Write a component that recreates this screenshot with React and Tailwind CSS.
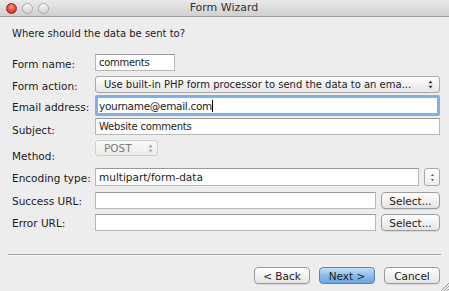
import React from "react";

function Arrows({ className = "" }) {
  return (
    <svg width="5" height="9" viewBox="0 0 5 9" className={className}>
      <path d="M2.5 0.5 L4.5 3.2 L0.5 3.2 Z" fill="currentColor" />
      <path d="M2.5 8.5 L4.5 5.8 L0.5 5.8 Z" fill="currentColor" />
    </svg>
  );
}

function Light({ red }) {
  return red ? (
    <div className="w-[11px] h-[11px] rounded-full bg-[radial-gradient(circle_at_50%_35%,#ff9a8a_0%,#e0443a_55%,#a8201a_100%)] border border-[#9a2a22]" />
  ) : (
    <div className="w-[11px] h-[11px] rounded-full bg-[linear-gradient(#f6f6f6,#d4d4d4)] border border-[#a9a9a9]" />
  );
}

function Row({ label, mt, h, labelPad = "pt-[2px]", children }) {
  return (
    <div className={`flex items-start ${mt} ${h}`}>
      <div className={`w-[95px] pl-[12px] shrink-0 whitespace-nowrap ${labelPad}`}>{label}</div>
      <div className="flex-1 flex items-start pr-[9px]">{children}</div>
    </div>
  );
}

function Btn({ children, className = "" }) {
  return (
    <div
      className={`h-[17px] flex items-center justify-center rounded-[4px] border border-[#9c9c9c] bg-[linear-gradient(#ffffff,#f1f1f1_50%,#e4e4e4)] shadow-[0_1px_0_rgba(0,0,0,0.08)] ${className}`}
    >
      {children}
    </div>
  );
}

export default function App() {
  return (
    <div className="w-[449px] h-[291px] bg-[#ededed] flex flex-col overflow-hidden relative text-[10.5px] leading-[12px] text-[#1c1c1c] font-['DejaVu_Sans',sans-serif]">
      {/* Title bar */}
      <div className="h-[17px] shrink-0 flex items-center relative bg-[linear-gradient(#e9e9e9,#d0d0d0)] border-b border-[#9d9d9d]">
        <div className="flex items-center gap-[5px] pl-[6px]">
          <Light red />
          <Light />
          <Light />
        </div>
        <div className="flex-1 text-center pr-[50px] text-[#333] text-[11px]">Form Wizard</div>
      </div>

      <div className="pl-[12px] mt-[11px] text-[10px]">Where should the data be sent to?</div>

      <Row label="Form name:" mt="mt-[14px]" h="h-[18px]" labelPad="pt-[4px]">
        <div className="w-[80px] h-[17px] bg-white border border-[#b9b9b9] border-t-[#999] flex items-center pl-[3px] text-[10px] tracking-[-0.3px]">
          comments
        </div>
      </Row>

      <Row label="Form action:" mt="mt-[4px]" h="h-[18px]" labelPad="pt-[4px]">
        <div className="flex-1 h-[17px] rounded-[3px] border border-[#a8a8a8] bg-[linear-gradient(#ffffff,#f0f0f0_55%,#e6e6e6)] flex items-center pl-[8px] pr-[6px] text-[10px]">
          <span className="flex-1">Use built-in PHP form processor to send the data to an ema...</span>
          <Arrows className="text-[#333]" />
        </div>
      </Row>

      <Row label="Email address:" mt="mt-[1px]" h="h-[21px]" labelPad="pt-[6px]">
        <div className="flex-1 h-[21px] bg-white border-[3px] border-[#7fb0e6] rounded-[2px] flex items-center pl-[1px] text-[10.5px] tracking-[-0.3px]">
          yourname@email.com<span className="w-px h-[12px] bg-black" />
        </div>
      </Row>

      <Row label="Subject:" mt="mt-[2px]" h="h-[18px]" labelPad="pt-[6px]">
        <div className="flex-1 h-[17px] bg-white border border-[#b9b9b9] border-t-[#999] flex items-center pl-[3px] text-[10px] tracking-[-0.2px]">
          Website comments
        </div>
      </Row>

      <Row label="Method:" mt="mt-[4px]" h="h-[18px]" labelPad="pt-[10px]">
        <div className="w-[63px] h-[16px] rounded-[3px] border border-[#cfcfcf] bg-[linear-gradient(#f8f8f8,#ececec)] flex items-center pl-[8px] pr-[4px] text-[#7a7a7a]">
          <span className="flex-1">POST</span>
          <Arrows className="text-[#a0a0a0]" />
        </div>
      </Row>

      <Row label="Encoding type:" mt="mt-[10px]" h="h-[19px]" labelPad="pt-[4px]">
        <div className="flex-1 h-[18px] bg-white border border-[#b9b9b9] border-t-[#999] flex items-center pl-[3px]">
          multipart/form-data
        </div>
        <div className="ml-[5px] w-[16px] h-[18px] rounded-[3px] border border-[#a8a8a8] bg-[linear-gradient(#ffffff,#ececec)] flex items-center justify-center">
          <svg width="5" height="9" viewBox="0 0 5 9">
            <path d="M2.5 1 L4 3 L1 3 Z" fill="#555" />
            <path d="M2.5 8 L4 6 L1 6 Z" fill="#555" />
          </svg>
        </div>
      </Row>

      <Row label="Success URL:" mt="mt-[5px]" h="h-[18px]" labelPad="pt-[3px]">
        <div className="flex-1 h-[17px] bg-white border border-[#b9b9b9] border-t-[#999]" />
        <Btn className="ml-[5px] w-[59px]">Select...</Btn>
      </Row>

      <Row label="Error URL:" mt="mt-[4px]" h="h-[18px]" labelPad="pt-[3px]">
        <div className="flex-1 h-[17px] bg-white border border-[#b9b9b9] border-t-[#999]" />
        <Btn className="ml-[5px] w-[59px]">Select...</Btn>
      </Row>

      <div className="mt-[22px] ml-[8px] mr-[8px] h-[2px] border-t border-[#a6a6a6] bg-[#f7f7f7]" />

      <div className="flex justify-end gap-[9px] pr-[9px] mt-[11px]">
        <Btn className="w-[56px]">&lt; Back</Btn>
        <div className="w-[56px] h-[17px] flex items-center justify-center rounded-[4px] border border-[#5a84b8] bg-[linear-gradient(#c4def6,#8dbdea_50%,#6aa6e2)]">
          Next &gt;
        </div>
        <Btn className="w-[56px]">Cancel</Btn>
      </div>

      {/* resize grip */}
      <svg className="absolute right-0 bottom-0" width="10" height="10" viewBox="0 0 10 10">
        <path d="M2 10 L10 2 M5 10 L10 5 M8 10 L10 8" stroke="#9a9a9a" strokeWidth="1" />
      </svg>
    </div>
  );
}
